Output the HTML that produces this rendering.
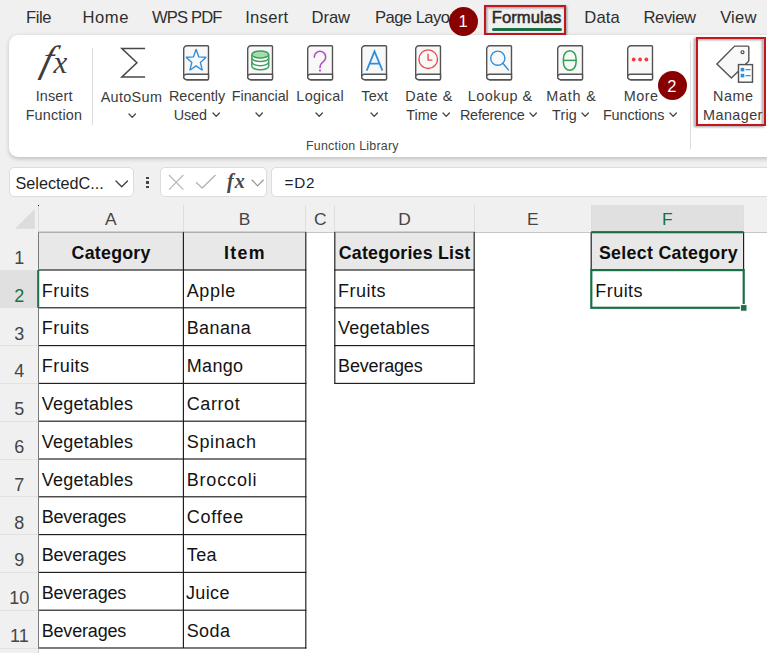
<!DOCTYPE html>
<html><head><meta charset="utf-8">
<style>
*{box-sizing:border-box;margin:0;padding:0}
html,body{width:767px;height:653px;overflow:hidden;background:#f0f0f0;font-family:"Liberation Sans",sans-serif;color:#333}
.abs{position:absolute}
.t{position:absolute;white-space:nowrap;line-height:20px}
#ribbon{position:absolute;left:9.2px;top:34.6px;width:800px;height:122.2px;background:#fff;border-radius:9px;box-shadow:0 1.5px 4px rgba(0,0,0,.2)}
.vsep{position:absolute;width:1px;background:#dcdcdc}
.fbox{position:absolute;top:167.1px;height:29.5px;background:#fff;border:1px solid #dcdcdc;border-radius:5px}
.ln{position:absolute;background:#262626}
svg{position:absolute;overflow:visible}
</style></head><body>
<div class="t" style="left:25.95px;top:7.55px;font-size:16.6px;color:#2e2e2e;letter-spacing:-0.418px;">File</div>
<div class="t" style="left:82.55px;top:7.55px;font-size:16.6px;color:#2e2e2e;letter-spacing:0.538px;">Home</div>
<div class="t" style="left:151.95px;top:7.55px;font-size:16.6px;color:#2e2e2e;letter-spacing:-0.855px;">WPS PDF</div>
<div class="t" style="left:245.25px;top:7.55px;font-size:16.6px;color:#2e2e2e;letter-spacing:0.256px;">Insert</div>
<div class="t" style="left:311.55px;top:7.55px;font-size:16.6px;color:#2e2e2e;letter-spacing:-0.081px;">Draw</div>
<div class="t" style="left:584.25px;top:7.55px;font-size:16.6px;color:#2e2e2e;letter-spacing:0.143px;">Data</div>
<div class="t" style="left:643.45px;top:7.55px;font-size:16.6px;color:#2e2e2e;letter-spacing:-0.367px;">Review</div>
<div class="t" style="left:720.15px;top:7.55px;font-size:16.6px;color:#2e2e2e;letter-spacing:0.204px;">View</div>
<div class="t" style="left:374.95px;top:7.55px;font-size:16.6px;color:#2e2e2e;letter-spacing:-0.535px;">Page Layout</div>
<div class="t" style="left:491.85px;top:7.55px;font-size:16.6px;color:#2c2c2c;letter-spacing:0.045px;-webkit-text-stroke:0.55px #2c2c2c;">Formulas</div>
<div class="abs" style="left:492px;top:28.2px;width:70px;height:2.6px;background:#1a7044;border-radius:1.5px"></div>
<div class="abs" style="left:483.9px;top:4.9px;width:82.4px;height:29.9px;border:2px solid #c4161c;filter:drop-shadow(1.6px 1.8px 1.2px rgba(0,0,0,.42))"></div>
<div class="abs" style="left:448.8px;top:6.8px;width:29px;height:29px;border-radius:50%;background:#880000;z-index:5"></div>
<div class="t" style="left:458.46px;top:10.88px;font-size:16.5px;color:#fff;z-index:6;">1</div>
<div id="ribbon"></div>
<div class="t" style="left:35.65px;top:85.61px;font-size:14.4px;color:#3b3b3b;letter-spacing:0.156px;">Insert</div>
<div class="t" style="left:25.65px;top:105.11px;font-size:14.4px;color:#3b3b3b;letter-spacing:0.152px;">Function</div>
<div class="vsep" style="left:91.6px;top:47.5px;height:77px"></div>
<div class="t" style="left:100.65px;top:87.01px;font-size:14.4px;color:#3b3b3b;letter-spacing:0.344px;">AutoSum</div>
<svg style="left:128.80px;top:114.10px" width="6.4" height="3.4" viewBox="0 0 6.4 3.4"><path d="M0 0 L3.2 3.4 L6.4 0" fill="none" stroke="#444" stroke-width="1.3" stroke-linecap="round" stroke-linejoin="round"/></svg>
<div class="t" style="left:168.95px;top:85.61px;font-size:14.4px;color:#3b3b3b;letter-spacing:0.024px;">Recently</div>
<div class="t" style="left:173.65px;top:105.11px;font-size:14.4px;color:#3b3b3b;letter-spacing:-0.107px;">Used</div>
<svg style="left:212.80px;top:112.50px" width="6.4" height="3.4" viewBox="0 0 6.4 3.4"><path d="M0 0 L3.2 3.4 L6.4 0" fill="none" stroke="#444" stroke-width="1.3" stroke-linecap="round" stroke-linejoin="round"/></svg>
<div class="t" style="left:231.85px;top:85.61px;font-size:14.4px;color:#3b3b3b;letter-spacing:-0.079px;">Financial</div>
<svg style="left:256.40px;top:112.50px" width="6.4" height="3.4" viewBox="0 0 6.4 3.4"><path d="M0 0 L3.2 3.4 L6.4 0" fill="none" stroke="#444" stroke-width="1.3" stroke-linecap="round" stroke-linejoin="round"/></svg>
<div class="t" style="left:296.35px;top:85.61px;font-size:14.4px;color:#3b3b3b;letter-spacing:0.310px;">Logical</div>
<svg style="left:316.10px;top:112.50px" width="6.4" height="3.4" viewBox="0 0 6.4 3.4"><path d="M0 0 L3.2 3.4 L6.4 0" fill="none" stroke="#444" stroke-width="1.3" stroke-linecap="round" stroke-linejoin="round"/></svg>
<div class="t" style="left:361.35px;top:85.61px;font-size:14.4px;color:#3b3b3b;letter-spacing:0.129px;">Text</div>
<svg style="left:371.10px;top:112.50px" width="6.4" height="3.4" viewBox="0 0 6.4 3.4"><path d="M0 0 L3.2 3.4 L6.4 0" fill="none" stroke="#444" stroke-width="1.3" stroke-linecap="round" stroke-linejoin="round"/></svg>
<div class="t" style="left:405.15px;top:85.61px;font-size:14.4px;color:#3b3b3b;letter-spacing:0.655px;">Date &amp;</div>
<div class="t" style="left:406.15px;top:105.11px;font-size:14.4px;color:#3b3b3b;letter-spacing:0.044px;">Time</div>
<svg style="left:443.40px;top:112.50px" width="6.4" height="3.4" viewBox="0 0 6.4 3.4"><path d="M0 0 L3.2 3.4 L6.4 0" fill="none" stroke="#444" stroke-width="1.3" stroke-linecap="round" stroke-linejoin="round"/></svg>
<div class="t" style="left:467.75px;top:85.61px;font-size:14.4px;color:#3b3b3b;letter-spacing:0.521px;">Lookup &amp;</div>
<div class="t" style="left:459.95px;top:105.11px;font-size:14.4px;color:#3b3b3b;letter-spacing:-0.205px;">Reference</div>
<svg style="left:530.00px;top:112.50px" width="6.4" height="3.4" viewBox="0 0 6.4 3.4"><path d="M0 0 L3.2 3.4 L6.4 0" fill="none" stroke="#444" stroke-width="1.3" stroke-linecap="round" stroke-linejoin="round"/></svg>
<div class="t" style="left:546.15px;top:85.61px;font-size:14.4px;color:#3b3b3b;letter-spacing:0.815px;">Math &amp;</div>
<div class="t" style="left:552.05px;top:105.11px;font-size:14.4px;color:#3b3b3b;letter-spacing:0.177px;">Trig</div>
<svg style="left:582.30px;top:112.50px" width="6.4" height="3.4" viewBox="0 0 6.4 3.4"><path d="M0 0 L3.2 3.4 L6.4 0" fill="none" stroke="#444" stroke-width="1.3" stroke-linecap="round" stroke-linejoin="round"/></svg>
<div class="t" style="left:623.85px;top:85.61px;font-size:14.4px;color:#3b3b3b;letter-spacing:0.496px;">More</div>
<div class="t" style="left:602.95px;top:105.11px;font-size:14.4px;color:#3b3b3b;letter-spacing:-0.117px;">Functions</div>
<svg style="left:669.60px;top:112.50px" width="6.4" height="3.4" viewBox="0 0 6.4 3.4"><path d="M0 0 L3.2 3.4 L6.4 0" fill="none" stroke="#444" stroke-width="1.3" stroke-linecap="round" stroke-linejoin="round"/></svg>
<div class="t" style="left:713.05px;top:85.61px;font-size:14.4px;color:#3b3b3b;letter-spacing:0.528px;">Name</div>
<div class="t" style="left:703.05px;top:104.61px;font-size:14.4px;color:#3b3b3b;letter-spacing:0.427px;">Manager</div>
<div class="t" style="left:306.04px;top:135.90px;font-size:12.4px;color:#444;letter-spacing:0.241px;">Function Library</div>
<div class="vsep" style="left:690.4px;top:41px;height:108px"></div>
<div class="abs" style="left:695.6px;top:37.2px;width:70.2px;height:88.4px;border:2px solid #c4161c;filter:drop-shadow(-1.8px 1.8px 1.2px rgba(0,0,0,.42))"></div>
<div class="abs" style="left:657.7px;top:71.2px;width:29px;height:29px;border-radius:50%;background:#880000;z-index:5"></div>
<div class="t" style="left:667.16px;top:75.88px;font-size:16.5px;color:#fff;z-index:6;">2</div>
<svg style="left:183.20px;top:45.1px" width="26.2" height="35.4" viewBox="0 0 26.2 35.4"><path d="M3.9 .7 H24.6 a.9 .9 0 0 1 .9 .9 V33.8 a.9 .9 0 0 1 -.9 .9 H3.7 a3 3 0 0 1 -3 -3 V3.9 a3.2 3.2 0 0 1 3.2 -3.2 Z" fill="#f8f8f8" stroke="#545454" stroke-width="1.4"/><path d="M.7 32 a2.7 2.7 0 0 1 2.7 -2.7 H25.5 V33.8 a.9 .9 0 0 1 -.9 .9 H3.7 a3 3 0 0 1 -3 -3 Z" fill="#fff" stroke="#545454" stroke-width="1.4"/><path d="M13.10 4.24 L15.75 11.90 L23.18 12.30 L17.38 17.43 L19.33 25.33 L13.10 20.85 L6.87 25.33 L8.82 17.43 L3.02 12.30 L10.45 11.90 Z" fill="none" stroke="#2f8fdc" stroke-width="1.35" stroke-linejoin="miter" stroke-miterlimit="2.2"/></svg>
<svg style="left:247.20px;top:45.1px" width="26.2" height="35.4" viewBox="0 0 26.2 35.4"><path d="M3.9 .7 H24.6 a.9 .9 0 0 1 .9 .9 V33.8 a.9 .9 0 0 1 -.9 .9 H3.7 a3 3 0 0 1 -3 -3 V3.9 a3.2 3.2 0 0 1 3.2 -3.2 Z" fill="#f8f8f8" stroke="#545454" stroke-width="1.4"/><path d="M.7 32 a2.7 2.7 0 0 1 2.7 -2.7 H25.5 V33.8 a.9 .9 0 0 1 -.9 .9 H3.7 a3 3 0 0 1 -3 -3 Z" fill="#fff" stroke="#545454" stroke-width="1.4"/><path d="M4.9 9.5 V21.3 a8.4 3.55 0 0 0 16.8 0 V9.5" fill="#fff" stroke="#3f9f5e" stroke-width="1.5"/><path d="M4.9 13 a8.4 3.55 0 0 0 16.8 0 M4.9 17.1 a8.4 3.55 0 0 0 16.8 0" fill="none" stroke="#3f9f5e" stroke-width="1.5"/><ellipse cx="13.3" cy="9.5" rx="8.4" ry="3.6" fill="#a6dbae" stroke="#3f9f5e" stroke-width="1.5"/></svg>
<svg style="left:307.00px;top:45.1px" width="26.2" height="35.4" viewBox="0 0 26.2 35.4"><path d="M3.9 .7 H24.6 a.9 .9 0 0 1 .9 .9 V33.8 a.9 .9 0 0 1 -.9 .9 H3.7 a3 3 0 0 1 -3 -3 V3.9 a3.2 3.2 0 0 1 3.2 -3.2 Z" fill="#f8f8f8" stroke="#545454" stroke-width="1.4"/><path d="M.7 32 a2.7 2.7 0 0 1 2.7 -2.7 H25.5 V33.8 a.9 .9 0 0 1 -.9 .9 H3.7 a3 3 0 0 1 -3 -3 Z" fill="#fff" stroke="#545454" stroke-width="1.4"/><path d="M7.3 12.3 a5.7 5.7 0 1 1 9 4.4 c-2.5 1.8 -3.3 3.2 -3.3 6" fill="none" stroke="#b450c6" stroke-width="1.5" stroke-linecap="round"/><circle cx="13" cy="25.6" r="1.15" fill="#b450c6"/></svg>
<svg style="left:361.30px;top:45.1px" width="26.2" height="35.4" viewBox="0 0 26.2 35.4"><path d="M3.9 .7 H24.6 a.9 .9 0 0 1 .9 .9 V33.8 a.9 .9 0 0 1 -.9 .9 H3.7 a3 3 0 0 1 -3 -3 V3.9 a3.2 3.2 0 0 1 3.2 -3.2 Z" fill="#f8f8f8" stroke="#545454" stroke-width="1.4"/><path d="M.7 32 a2.7 2.7 0 0 1 2.7 -2.7 H25.5 V33.8 a.9 .9 0 0 1 -.9 .9 H3.7 a3 3 0 0 1 -3 -3 Z" fill="#fff" stroke="#545454" stroke-width="1.4"/><path d="M5.7 25.6 L13.5 6.4 L21.5 25.6 M8.6 18.6 H18.6" fill="none" stroke="#2f8fdc" stroke-width="1.8" stroke-linejoin="miter"/></svg>
<svg style="left:415.10px;top:45.1px" width="26.2" height="35.4" viewBox="0 0 26.2 35.4"><path d="M3.9 .7 H24.6 a.9 .9 0 0 1 .9 .9 V33.8 a.9 .9 0 0 1 -.9 .9 H3.7 a3 3 0 0 1 -3 -3 V3.9 a3.2 3.2 0 0 1 3.2 -3.2 Z" fill="#f8f8f8" stroke="#545454" stroke-width="1.4"/><path d="M.7 32 a2.7 2.7 0 0 1 2.7 -2.7 H25.5 V33.8 a.9 .9 0 0 1 -.9 .9 H3.7 a3 3 0 0 1 -3 -3 Z" fill="#fff" stroke="#545454" stroke-width="1.4"/><circle cx="13.2" cy="14.2" r="9.3" fill="none" stroke="#e8484e" stroke-width="1.35"/><path d="M13.1 8.8 V15.2 H17.4" fill="none" stroke="#e8484e" stroke-width="1.35"/></svg>
<svg style="left:486.00px;top:45.1px" width="26.2" height="35.4" viewBox="0 0 26.2 35.4"><path d="M3.9 .7 H24.6 a.9 .9 0 0 1 .9 .9 V33.8 a.9 .9 0 0 1 -.9 .9 H3.7 a3 3 0 0 1 -3 -3 V3.9 a3.2 3.2 0 0 1 3.2 -3.2 Z" fill="#f8f8f8" stroke="#545454" stroke-width="1.4"/><path d="M.7 32 a2.7 2.7 0 0 1 2.7 -2.7 H25.5 V33.8 a.9 .9 0 0 1 -.9 .9 H3.7 a3 3 0 0 1 -3 -3 Z" fill="#fff" stroke="#545454" stroke-width="1.4"/><circle cx="11.8" cy="13.2" r="7.1" fill="none" stroke="#2f8fdc" stroke-width="1.4"/><path d="M16.9 18.3 L22.4 24.9" stroke="#2f8fdc" stroke-width="1.5" stroke-linecap="round"/></svg>
<svg style="left:557.30px;top:45.1px" width="26.2" height="35.4" viewBox="0 0 26.2 35.4"><path d="M3.9 .7 H24.6 a.9 .9 0 0 1 .9 .9 V33.8 a.9 .9 0 0 1 -.9 .9 H3.7 a3 3 0 0 1 -3 -3 V3.9 a3.2 3.2 0 0 1 3.2 -3.2 Z" fill="#f8f8f8" stroke="#545454" stroke-width="1.4"/><path d="M.7 32 a2.7 2.7 0 0 1 2.7 -2.7 H25.5 V33.8 a.9 .9 0 0 1 -.9 .9 H3.7 a3 3 0 0 1 -3 -3 Z" fill="#fff" stroke="#545454" stroke-width="1.4"/><rect x="6.4" y="5.7" width="12.7" height="19.6" rx="6.35" ry="8" fill="none" stroke="#2ea350" stroke-width="1.5"/><path d="M6.4 15.4 H19.1" stroke="#2ea350" stroke-width="1.5"/></svg>
<svg style="left:626.90px;top:45.1px" width="26.2" height="35.4" viewBox="0 0 26.2 35.4"><path d="M3.9 .7 H24.6 a.9 .9 0 0 1 .9 .9 V33.8 a.9 .9 0 0 1 -.9 .9 H3.7 a3 3 0 0 1 -3 -3 V3.9 a3.2 3.2 0 0 1 3.2 -3.2 Z" fill="#f8f8f8" stroke="#545454" stroke-width="1.4"/><path d="M.7 32 a2.7 2.7 0 0 1 2.7 -2.7 H25.5 V33.8 a.9 .9 0 0 1 -.9 .9 H3.7 a3 3 0 0 1 -3 -3 Z" fill="#fff" stroke="#545454" stroke-width="1.4"/><circle cx="6.7" cy="14.5" r="1.9" fill="#f03c3c"/><circle cx="13.1" cy="14.5" r="1.9" fill="#f03c3c"/><circle cx="19.4" cy="14.5" r="1.9" fill="#f03c3c"/></svg>
<div class="t" style="left:36.2px;top:34.2px;font-family:'Liberation Serif',serif;font-style:italic;font-size:38px;line-height:50px;color:#3c3c3c;transform:skewX(-15deg);transform-origin:0 100%">f</div>
<div class="t" style="left:53.6px;top:38.1px;font-family:'Liberation Serif',serif;font-style:italic;font-size:31px;line-height:50px;color:#3c3c3c">x</div>
<svg style="left:119.5px;top:47px" width="26" height="30.5" viewBox="0 0 26 30.5"><path d="M25.1 1.5 H1.9 L16.9 15.8 L1.9 29.9 H25.1" fill="none" stroke="#484848" stroke-width="1.55" stroke-linejoin="miter"/></svg>
<svg style="left:714px;top:43px" width="42" height="42" viewBox="714 43 42 42"><path d="M716.9 64 L734.6 46.1 H747.9 a.9 .9 0 0 1 .9 .9 V60.6 a1.2 1.2 0 0 1 -.4 .9 L731.4 77.9 Z" fill="#f8f8f8" stroke="#545454" stroke-width="1.45" stroke-linejoin="miter"/><circle cx="742.5" cy="52.2" r="1.5" fill="#fff" stroke="#3a3a3a" stroke-width="1.1"/><rect x="738.5" y="64.6" width="14" height="17.6" fill="#fff" stroke="#545454" stroke-width="1.45"/><rect x="740.7" y="67.8" width="3.6" height="3.6" fill="#2f8fdc"/><rect x="740.7" y="73.8" width="3.6" height="3.6" fill="#2f8fdc"/><path d="M745.6 69.6 H750.6 M745.6 75.6 H750.6" stroke="#2f8fdc" stroke-width="1.3"/></svg>
<div class="fbox" style="left:9.2px;width:125.2px"></div>
<div class="t" style="left:15.57px;top:173.19px;font-size:16.2px;color:#222;letter-spacing:-0.008px;">SelectedC...</div>
<svg style="left:115.75px;top:181.10px" width="11.5" height="5.8" viewBox="0 0 11.5 5.8"><path d="M0 0 L5.75 5.8 L11.5 0" fill="none" stroke="#444" stroke-width="1.4" stroke-linecap="round" stroke-linejoin="round"/></svg>
<div class="abs" style="left:146.3px;top:176.6px;width:2.6px;height:2.6px;background:#444"></div>
<div class="abs" style="left:146.3px;top:181.1px;width:2.6px;height:2.6px;background:#444"></div>
<div class="abs" style="left:146.3px;top:185.6px;width:2.6px;height:2.6px;background:#444"></div>
<div class="fbox" style="left:160.2px;width:106.8px"></div>
<svg style="left:168.8px;top:174.6px" width="14.4" height="14.6" viewBox="0 0 14.4 14.6"><path d="M0 0 L14.4 14.6 M14.4 0 L0 14.6" stroke="#b8b8b8" stroke-width="1.25" fill="none"/></svg>
<svg style="left:196px;top:175.4px" width="19.5" height="13" viewBox="0 0 19.5 13"><path d="M0 7.2 L6.2 13 L19.5 0" stroke="#b4b4b4" stroke-width="1.3" fill="none"/></svg>
<div class="t" style="left:227px;top:168.9px;font-family:'Liberation Serif',serif;font-style:italic;font-weight:bold;font-size:20px;line-height:24px;color:#474747;letter-spacing:1px">fx</div>
<svg style="left:251.85px;top:180.35px" width="11.3" height="5.9" viewBox="0 0 11.3 5.9"><path d="M0 0 L5.65 5.9 L11.3 0" fill="none" stroke="#969696" stroke-width="1.15" stroke-linecap="round" stroke-linejoin="round"/></svg>
<div class="fbox" style="left:271.4px;width:520px"></div>
<div class="t" style="left:284.61px;top:172.90px;font-size:15.3px;color:#222;letter-spacing:0.692px;">=D2</div>
<div class="abs" style="left:38.4px;top:232.2px;width:740px;height:430px;background:#fff"></div>
<div class="abs" style="left:0;top:205.0px;width:767px;height:27.19999999999999px;background:#f0f0f0"></div>
<div class="abs" style="left:38.4px;top:231.6px;width:740px;height:1.1px;background:#c6c6c6"></div>
<div class="abs" style="left:591.2px;top:205.0px;width:152.4px;height:27.19999999999999px;background:#e0e0e0"></div>
<div class="abs" style="left:182.9px;top:205.0px;width:1px;height:27.19999999999999px;background:#dedede"></div>
<div class="t" style="left:105.10px;top:209.17px;font-size:17.4px;color:#454545;">A</div>
<div class="abs" style="left:305.3px;top:205.0px;width:1px;height:27.19999999999999px;background:#dedede"></div>
<div class="t" style="left:238.80px;top:209.17px;font-size:17.4px;color:#454545;">B</div>
<div class="abs" style="left:334.3px;top:205.0px;width:1px;height:27.19999999999999px;background:#dedede"></div>
<div class="t" style="left:314.02px;top:209.17px;font-size:17.4px;color:#454545;">C</div>
<div class="abs" style="left:473.7px;top:205.0px;width:1px;height:27.19999999999999px;background:#dedede"></div>
<div class="t" style="left:398.22px;top:209.17px;font-size:17.4px;color:#454545;">D</div>
<div class="abs" style="left:590.7px;top:205.0px;width:1px;height:27.19999999999999px;background:#dedede"></div>
<div class="t" style="left:526.90px;top:209.17px;font-size:17.4px;color:#454545;">E</div>
<div class="abs" style="left:743.1px;top:205.0px;width:1px;height:27.19999999999999px;background:#dedede"></div>
<div class="t" style="left:662.09px;top:209.17px;font-size:17.4px;color:#1a7044;">F</div>
<div class="abs" style="left:38px;top:205.0px;width:1px;height:27.19999999999999px;background:#dedede"></div>
<svg style="left:15.4px;top:208.8px" width="19.8" height="19.8" viewBox="0 0 20 20"><path d="M20 0 L20 20 L0 20 Z" fill="#dcdcdc"/></svg>
<div class="abs" style="left:37.8px;top:204.6px;width:1.2px;height:1.2px;background:#222"></div>
<div class="abs" style="left:0;top:270.0px;width:38.4px;height:37.8px;background:#e0e0e0"></div>
<div class="abs" style="left:0;top:269.5px;width:38.4px;height:1px;background:#e2e2e2"></div>
<div class="t" style="left:14.29px;top:248.06px;font-size:18.0px;color:#454545;">1</div>
<div class="abs" style="left:0;top:307.3px;width:38.4px;height:1px;background:#e2e2e2"></div>
<div class="t" style="left:14.29px;top:285.86px;font-size:18.0px;color:#1a7044;">2</div>
<div class="abs" style="left:0;top:345.1px;width:38.4px;height:1px;background:#e2e2e2"></div>
<div class="t" style="left:14.29px;top:323.66px;font-size:18.0px;color:#454545;">3</div>
<div class="abs" style="left:0;top:382.9px;width:38.4px;height:1px;background:#e2e2e2"></div>
<div class="t" style="left:14.29px;top:361.46px;font-size:18.0px;color:#454545;">4</div>
<div class="abs" style="left:0;top:420.7px;width:38.4px;height:1px;background:#e2e2e2"></div>
<div class="t" style="left:14.29px;top:399.26px;font-size:18.0px;color:#454545;">5</div>
<div class="abs" style="left:0;top:458.5px;width:38.4px;height:1px;background:#e2e2e2"></div>
<div class="t" style="left:14.29px;top:437.06px;font-size:18.0px;color:#454545;">6</div>
<div class="abs" style="left:0;top:496.3px;width:38.4px;height:1px;background:#e2e2e2"></div>
<div class="t" style="left:14.29px;top:474.86px;font-size:18.0px;color:#454545;">7</div>
<div class="abs" style="left:0;top:534.1px;width:38.4px;height:1px;background:#e2e2e2"></div>
<div class="t" style="left:14.29px;top:512.66px;font-size:18.0px;color:#454545;">8</div>
<div class="abs" style="left:0;top:571.9px;width:38.4px;height:1px;background:#e2e2e2"></div>
<div class="t" style="left:14.29px;top:550.46px;font-size:18.0px;color:#454545;">9</div>
<div class="abs" style="left:0;top:609.7px;width:38.4px;height:1px;background:#e2e2e2"></div>
<div class="t" style="left:9.29px;top:588.26px;font-size:18.0px;color:#454545;">10</div>
<div class="abs" style="left:0;top:647.5px;width:38.4px;height:1px;background:#e2e2e2"></div>
<div class="t" style="left:9.96px;top:626.06px;font-size:18.0px;color:#454545;">11</div>
<div class="abs" style="left:38px;top:232.2px;width:1px;height:430px;background:#d0d0d0"></div>
<div class="abs" style="left:38.4px;top:232.2px;width:267.40000000000003px;height:37.8px;background:#e8e8e8"></div>
<div class="abs" style="left:334.8px;top:232.2px;width:139.39999999999998px;height:37.8px;background:#e8e8e8"></div>
<div class="abs" style="left:591.2px;top:232.2px;width:152.39999999999998px;height:37.8px;background:#e8e8e8"></div>
<svg style="left:0;top:0" width="767" height="653" viewBox="0 0 767 653"><rect x="38.40" y="231.60" width="268.00" height="1.2" fill="#a0a0a0"/><rect x="38.40" y="269.43" width="268.00" height="1.15" fill="#1c1c1c"/><rect x="38.40" y="307.22" width="268.00" height="1.15" fill="#1c1c1c"/><rect x="38.40" y="345.02" width="268.00" height="1.15" fill="#1c1c1c"/><rect x="38.40" y="382.82" width="268.00" height="1.15" fill="#1c1c1c"/><rect x="38.40" y="420.62" width="268.00" height="1.15" fill="#1c1c1c"/><rect x="38.40" y="458.43" width="268.00" height="1.15" fill="#1c1c1c"/><rect x="38.40" y="496.22" width="268.00" height="1.15" fill="#1c1c1c"/><rect x="38.40" y="534.02" width="268.00" height="1.15" fill="#1c1c1c"/><rect x="38.40" y="571.82" width="268.00" height="1.15" fill="#1c1c1c"/><rect x="38.40" y="609.62" width="268.00" height="1.15" fill="#1c1c1c"/><rect x="38.40" y="647.42" width="268.00" height="1.15" fill="#1c1c1c"/><rect x="182.83" y="232.20" width="1.15" height="415.80" fill="#1c1c1c"/><rect x="305.23" y="232.20" width="1.15" height="416.40" fill="#1c1c1c"/><rect x="38.00" y="232.20" width="1.0" height="415.80" fill="#7a7a7a"/><rect x="334.20" y="231.60" width="140.60" height="1.2" fill="#a0a0a0"/><rect x="334.20" y="269.43" width="140.60" height="1.15" fill="#1c1c1c"/><rect x="334.20" y="307.22" width="140.60" height="1.15" fill="#1c1c1c"/><rect x="334.20" y="345.02" width="140.60" height="1.15" fill="#1c1c1c"/><rect x="334.20" y="382.82" width="140.60" height="1.15" fill="#1c1c1c"/><rect x="334.23" y="232.20" width="1.15" height="151.20" fill="#1c1c1c"/><rect x="473.62" y="232.20" width="1.15" height="151.20" fill="#1c1c1c"/><rect x="590.62" y="232.20" width="1.15" height="37.80" fill="#1c1c1c"/><rect x="743.02" y="232.20" width="1.15" height="37.80" fill="#1c1c1c"/></svg>
<div class="t" style="left:71.60px;top:242.83px;font-size:17.8px;color:#0e0e0e;letter-spacing:0.250px;font-weight:bold;">Category</div>
<div class="t" style="left:224.10px;top:242.83px;font-size:17.8px;color:#0e0e0e;letter-spacing:1.334px;font-weight:bold;">Item</div>
<div class="t" style="left:338.80px;top:242.83px;font-size:17.8px;color:#0e0e0e;letter-spacing:0.208px;font-weight:bold;">Categories List</div>
<div class="t" style="left:598.90px;top:242.83px;font-size:17.8px;color:#0e0e0e;letter-spacing:0.311px;font-weight:bold;">Select Category</div>
<div class="t" style="left:41.69px;top:280.56px;font-size:18.0px;color:#141414;letter-spacing:0.484px;">Fruits</div>
<div class="t" style="left:41.69px;top:318.36px;font-size:18.0px;color:#141414;letter-spacing:0.484px;">Fruits</div>
<div class="t" style="left:41.69px;top:356.16px;font-size:18.0px;color:#141414;letter-spacing:0.484px;">Fruits</div>
<div class="t" style="left:41.69px;top:393.96px;font-size:18.0px;color:#141414;letter-spacing:0.249px;">Vegetables</div>
<div class="t" style="left:41.69px;top:431.76px;font-size:18.0px;color:#141414;letter-spacing:0.249px;">Vegetables</div>
<div class="t" style="left:41.69px;top:469.56px;font-size:18.0px;color:#141414;letter-spacing:0.249px;">Vegetables</div>
<div class="t" style="left:41.69px;top:507.36px;font-size:18.0px;color:#141414;letter-spacing:-0.179px;">Beverages</div>
<div class="t" style="left:41.69px;top:545.16px;font-size:18.0px;color:#141414;letter-spacing:-0.179px;">Beverages</div>
<div class="t" style="left:41.69px;top:582.96px;font-size:18.0px;color:#141414;letter-spacing:-0.179px;">Beverages</div>
<div class="t" style="left:41.69px;top:620.76px;font-size:18.0px;color:#141414;letter-spacing:-0.179px;">Beverages</div>
<div class="t" style="left:186.69px;top:280.56px;font-size:18.0px;color:#141414;letter-spacing:0.646px;">Apple</div>
<div class="t" style="left:186.69px;top:318.36px;font-size:18.0px;color:#141414;letter-spacing:0.392px;">Banana</div>
<div class="t" style="left:186.69px;top:356.16px;font-size:18.0px;color:#141414;letter-spacing:0.346px;">Mango</div>
<div class="t" style="left:186.69px;top:393.96px;font-size:18.0px;color:#141414;letter-spacing:0.602px;">Carrot</div>
<div class="t" style="left:186.69px;top:431.76px;font-size:18.0px;color:#141414;letter-spacing:0.695px;">Spinach</div>
<div class="t" style="left:186.69px;top:469.56px;font-size:18.0px;color:#141414;letter-spacing:0.843px;">Broccoli</div>
<div class="t" style="left:186.69px;top:507.36px;font-size:18.0px;color:#141414;letter-spacing:0.782px;">Coffee</div>
<div class="t" style="left:186.69px;top:545.16px;font-size:18.0px;color:#141414;letter-spacing:0.449px;">Tea</div>
<div class="t" style="left:185.89px;top:582.96px;font-size:18.0px;color:#141414;letter-spacing:0.400px;">Juice</div>
<div class="t" style="left:186.69px;top:620.76px;font-size:18.0px;color:#141414;letter-spacing:0.427px;">Soda</div>
<div class="t" style="left:338.09px;top:280.56px;font-size:18.0px;color:#141414;letter-spacing:0.484px;">Fruits</div>
<div class="t" style="left:338.09px;top:318.36px;font-size:18.0px;color:#141414;letter-spacing:0.249px;">Vegetables</div>
<div class="t" style="left:338.09px;top:356.16px;font-size:18.0px;color:#141414;letter-spacing:-0.179px;">Beverages</div>
<div class="t" style="left:595.19px;top:280.56px;font-size:18.0px;color:#141414;letter-spacing:0.484px;">Fruits</div>
<svg style="left:0;top:0" width="767" height="653" viewBox="0 0 767 653"><rect x="591.3" y="270.10" width="152.4" height="37.70" fill="none" stroke="#1a7044" stroke-width="2.2"/><rect x="740.4" y="304.60" width="6.6" height="6.6" fill="#1a7044" stroke="#fff" stroke-width="1"/><rect x="591.20" y="231.10" width="152.40" height="2.2" fill="#1a7044"/><rect x="37.20" y="270.00" width="2.0" height="37.80" fill="#1a7044"/></svg>
</body></html>
